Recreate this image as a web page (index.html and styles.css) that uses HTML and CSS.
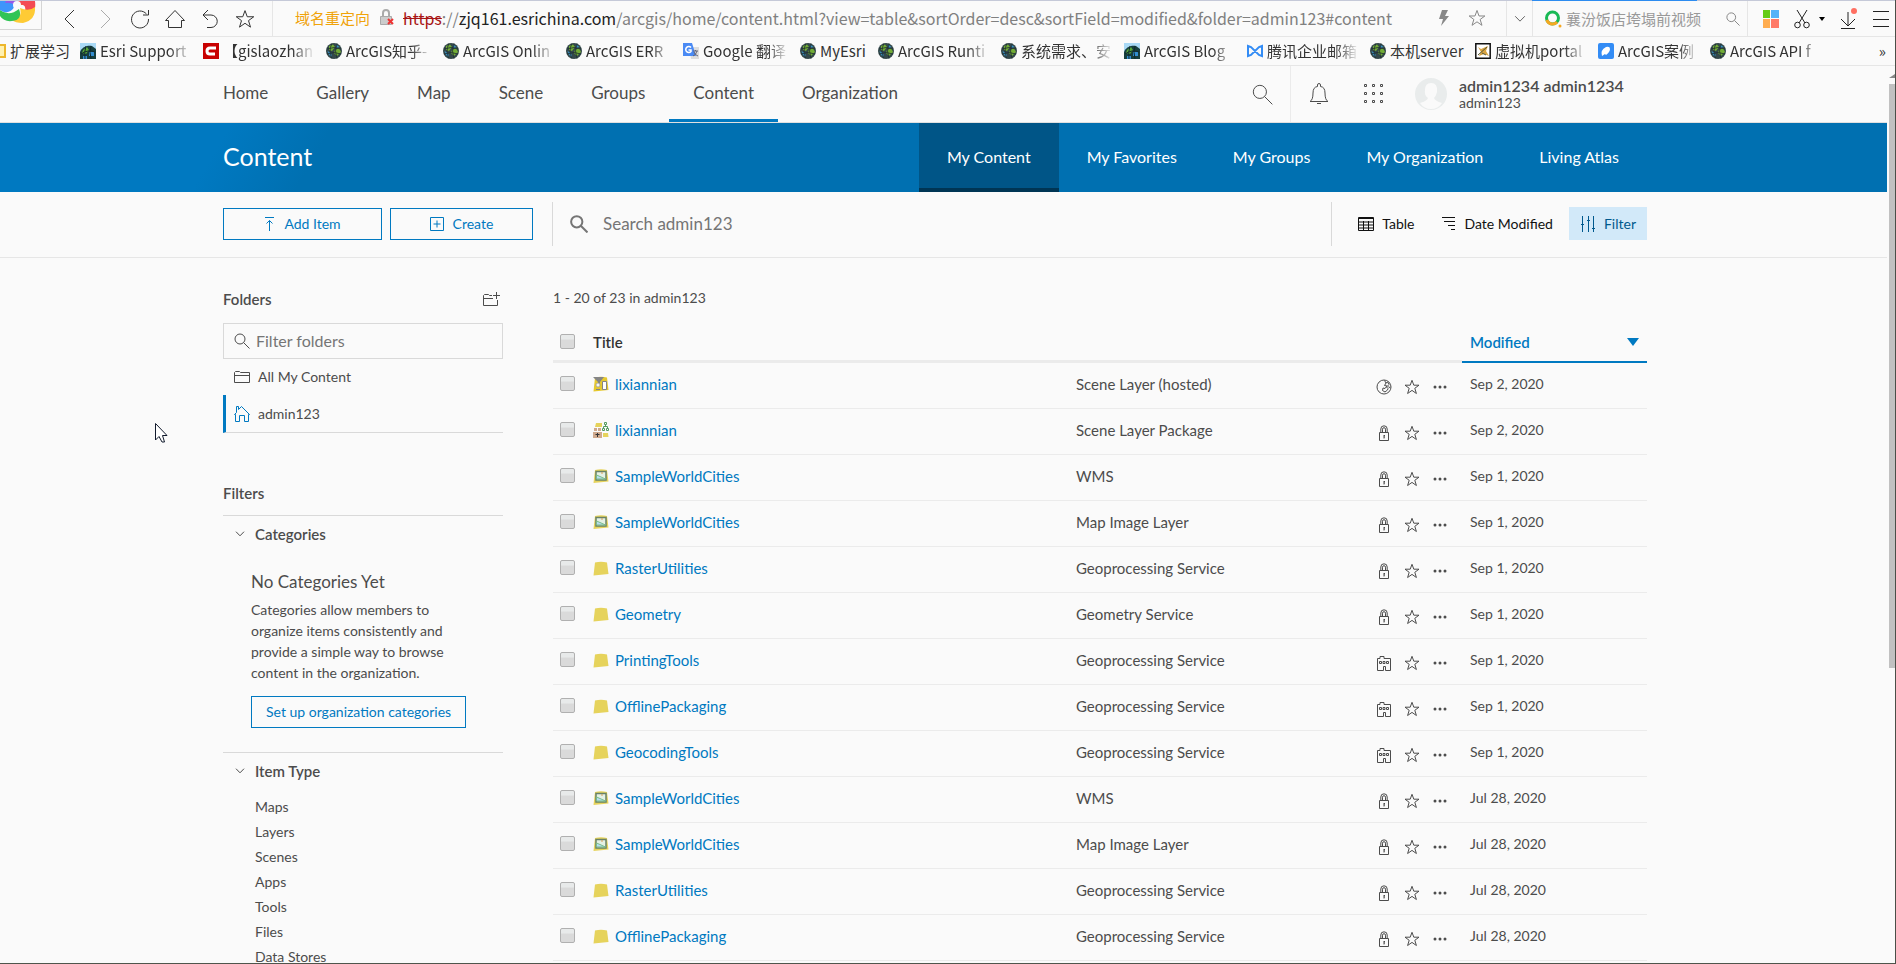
FILE: index.html
```html
<!DOCTYPE html>
<html lang="en">
  <head>
    <meta charset="UTF-8" />
    <meta name="viewport" content="width=device-width, initial-scale=1.0" />
    <title>Content</title>
    <link rel="stylesheet" href="styles.css">
  </head>
  <body>
    <svg class="sprite" aria-hidden="true">
      <symbol id="search" viewBox="0 0 16 16"><circle cx="6" cy="6" r="5" /><path d="M9.6 9.6 15.5 15.5" /></symbol>
      <symbol id="star" viewBox="0 0 16 16"><path d="M8 1.3 9.8 6.2H15L10.8 9.3 12.4 14.5 8 11.4 3.6 14.5 5.2 9.3 1 6.2H6.2Z" /></symbol>
      <symbol id="lock" viewBox="0 0 16 16"><path d="M3.5 7.5h9v8h-9zM4.8 7.5V4a3.2 3.2 0 0 1 6.4 0v3.5M6.5 7.5V4.2a1.5 1.5 0 0 1 3 0v3.3M8 10v3.5M8 10.5h1M8 12h1" /></symbol>
      <symbol id="globe" viewBox="0 0 16 16"><circle cx="8" cy="8" r="7" /><path d="M8.5 1.5 10 4 8.5 6.5 11 7 9 9.5 7 9 6.5 11.5 9 13 11.5 11 12 9.5 10.5 8M10 4l1.5-1L13 5.5 11.5 7 13 8.5l1.5-.5" /></symbol>
      <symbol id="org" viewBox="0 0 16 16"><path d="M1.5 15.5V3.5H4V1.5H8V3.5H14.5V15.5H9.5V11.5H7.5V15.5ZM3.5 6.5h2v2h-2zM7 6.5h2v2H7zM10.5 6.5h2v2h-2z" /></symbol>
      <symbol id="dots" viewBox="0 0 16 16"><g class="dots"><circle cx="3" cy="8" r="1.5" /><circle cx="8" cy="8" r="1.5" /><circle cx="13" cy="8" r="1.5" /></g></symbol>
      <symbol id="chevron" viewBox="0 0 10 6"><path d="M1 .7 5 4.8 9 .7" /></symbol>
      <symbol id="tool" viewBox="0 0 16 16"><path fill="#e6d35c" d="M2 2.5Q8 1 14 2.5L15.5 14Q8 14.5.5 15.5Z" /></symbol>
      <symbol id="map" viewBox="0 0 16 16"><path fill="#e6d35c" d="M2 2Q8 .5 14 2L15.5 13.5Q8 14 .5 15Z" /><path fill="#e4f1e5" stroke="#6a8268" stroke-width="1.5" d="M3 3.500h10v8.500H3z" /><path fill="#b7dcf2" stroke="#79bd89" d="M3.500 7 7 8.500 12.500 11H3.500Z" /><circle cx="9" cy="5" r=".8" fill="#d9944b" /></symbol>
      <symbol id="scene" viewBox="0 0 16 16"><path fill="#e6c92f" d="M2 1.500Q8 0 14 1.500L15.500 14Q8 14.500.500 15.500Z" /><path fill="#858585" d="M0 1h11L7 6v3H5V6Z" /><path fill="#fff" stroke="#858585" d="M9.500 5.500h4v8h-4z" /><circle cx="5" cy="9" r="2" fill="#f5f5f5" stroke="#999" stroke-width=".7" /><path fill="#ddd" stroke="#858585" d="M3 13.500h4" /></symbol>
      <symbol id="package" viewBox="0 0 16 16"><path fill="#e6d35c" d="M3 1h6v4H2zM10 11h5l.500 4H10Z" /><path fill="#cfa98d" d="M0 10h9v6H0zM1 6h3v3H1zM5 6h3v3H5z" /><path fill="none" stroke="#333" d="M4.500 11v4M2.500 12.500h4" /><path fill="none" stroke="#559a60" d="M11.500.500h2v2h-2zM9.500 6.500h2v2h-2zM13.500 6.500h2v2h-2zM12.500 3v2M10.500 6V4.500h4V6" /></symbol>
      <symbol id="earth" viewBox="0 0 16 16"><circle cx="8" cy="8" r="8" fill="#34484a" /><path fill="#72ad35" d="M3 3 7 1.500 9 4 6 8 3 7ZM9 7 13 5 15 9 11 13 8 10Z" /><path fill="#388fc0" d="M10 1.500 13.500 4 10 5ZM1.500 8 5 10 6 14 3 12Z" /><path fill="none" stroke="#1d2c31" stroke-width=".8" d="M1 6Q8 3 15 6M1 11Q8 8 15 11M6 .500Q2 8 6 15.500M11 .500Q8 8 11 15.500" /></symbol>
      <symbol id="earthBox" viewBox="0 0 16 16"><path fill="#a9d9f5" d="M0 0h16v16H0z" /><path fill="#173f3e" d="M0 16V9C2 4 7 2 12 3l4 3v10Z" /><path fill="#58a83a" d="M3 7 7 4 9 7 6 11 2 10Z" /><path fill="#338ed0" d="M9 9h5v4H9zM3 13h4v3H3z" /><path fill="none" stroke="#102a2e" d="M1 11Q8 6 15 9M6 3Q4 9 5 16M11 3Q9 9 11 16" /></symbol>
    </svg>

    <div class="window">
      <div class="tab-strip"><span class="tab-loading"></span></div>
      <header class="browser-bar">
        <div class="browser-logo">
          <svg width="40" height="29" viewBox="0 0 40 29"><path fill="#fb8c2b" d="M16 4C10-3 17-15 31-9L34 4Z" /><path fill="#f34b54" d="M16 4 24-9Q37-7 35 7Q31 14 25 10Q27 2 16 4Z" /><path fill="#fecb35" d="M20 7Q29 11 35 6Q36 19 23 22Q15 22 12 19Q23 17 20 7Z" /><path fill="#31c455" d="M19 8Q23 19 12 20Q4 21 0 15V9Q9 16 19 8Z" /><path fill="#3e95fb" d="M15 5Q9 15 0 9V0H10Z" /><path fill="#9657e7" d="M8-4 19-1 15 5Q12 1 5 2Z" /><circle cx="17" cy="4" r="4" fill="#fafafa" /></svg>
        </div>
        <nav class="browser-nav" aria-label="Browser">
          <button aria-label="Back"><svg class="icon" width="20" height="20" viewBox="0 0 20 20"><path d="M14 1 5 10 14 19" /></svg></button>
          <button class="disabled" aria-label="Forward"><svg class="icon" width="20" height="20" viewBox="0 0 20 20"><path d="M6 1 15 10 6 19" /></svg></button>
          <button aria-label="Reload"><svg class="icon" width="20" height="20" viewBox="0 0 20 20"><path d="M16.500 5A8.500 8.500 0 1 0 18.500 10M18.500 1V6H13" /></svg></button>
          <button aria-label="Home page"><svg class="icon" width="20" height="20" viewBox="0 0 20 20"><path d="M.500 11.500 10 1.500 19.500 11.500H16.500V18.500H3.500V11.500Z" /></svg></button>
          <button aria-label="Undo"><svg class="icon" width="20" height="20" viewBox="0 0 20 20"><path d="M8 1 3 6 8 11M3 6H11A6 6 0 0 1 11 18.500H7" /></svg></button>
          <button aria-label="Favorites"><svg class="icon" width="20" height="20"><use href="#star" /></svg></button>
        </nav>
        <div class="address">
          <span class="redirect">域名重定向</span>
          <svg width="15" height="17" viewBox="0 0 15 17"><path fill="none" stroke="#aaa" stroke-width="2" d="M3 8V4a3 3 0 0 1 6 0v4" /><path fill="#ccc" stroke="#aaa" d="M.500 7.500h11v8H.500z" /><path stroke="#e33" stroke-width="2" d="m8 10 5 5M13 10 8 15" /></svg>
          <span class="url"><s>https</s>://<b>zjq161.esrichina.com</b>/arcgis/home/content.html?view=table&amp;sortOrder=desc&amp;sortField=modified&amp;folder=admin123#content</span>
          <svg class="bolt" width="12" height="16" viewBox="0 0 12 16"><path fill="#888" d="M4 0h6L7 6h4L3 16 5 9H1Z" /></svg>
          <svg class="icon grey" width="18" height="18"><use href="#star" /></svg>
        </div>
        <button class="address-drop" aria-label="Show addresses"><svg class="icon" width="12" height="8"><use href="#chevron" /></svg></button>
        <div class="web-search">
          <svg width="17" height="18" viewBox="0 0 17 18"><circle cx="7.500" cy="8" r="6" fill="none" stroke="#19b955" stroke-width="3" /><path fill="none" stroke="#f6a821" stroke-width="3" d="M1.800 10A6 6 0 0 0 12 12" /><circle cx="15" cy="16" r="1.500" fill="#f6a821" /></svg>
          <input type="text" aria-label="Web search" placeholder="襄汾饭店垮塌前视频" />
          <svg class="icon grey" width="14" height="14"><use href="#search" /></svg>
        </div>
        <div class="browser-tools">
          <button aria-label="Apps"><svg width="16" height="18" viewBox="0 0 16 18"><path fill="#64cc16" d="M0 0h7v8H0z" /><path fill="#56b2f7" d="M8 0h8v8H8z" /><path fill="#ffad50" d="M0 9h7v9H0z" /><path fill="#ff7a68" d="M8 9h8v9H8z" /></svg></button>
          <button class="cut" aria-label="Cut"><svg class="icon" width="16" height="20" viewBox="0 0 16 20"><path d="M3 1 11 14M13 1 5 14" /><circle cx="3.500" cy="16" r="2.800" /><circle cx="12.500" cy="16" r="2.800" /></svg><svg width="6" height="4"><path d="M0 0h6L3 4Z" /></svg></button>
          <button aria-label="Downloads"><svg class="download" width="18" height="22" viewBox="0 0 18 22"><path d="M8 4V18M1 11 8 18 15 11M1 20.500H15" /><circle cx="14" cy="3" r="3" /></svg></button>
          <button aria-label="Menu"><svg class="menu" width="16" height="18"><path d="M0 1.500H16M0 9.500H16M0 16.500H16" /></svg></button>
        </div>
      </header>

      <nav class="bookmarks" aria-label="Bookmarks">
        <a class="bookmark cut-off" href="#"><svg width="6" height="14" viewBox="0 0 6 14"><path fill="#fff1b0" stroke="#edb72b" stroke-width="2" d="M-5 1H5V13H-5Z" /></svg><span>扩展学习</span></a>
        <a class="bookmark" href="#"><svg width="16" height="16"><use href="#earthBox" /></svg><span>Esri Support</span></a>
        <a class="bookmark" href="#"><svg width="16" height="16" viewBox="0 0 16 16"><path fill="#c80000" d="M0 0h16v16H0z" /><path fill="none" stroke="#fff" stroke-width="3" d="M13 5H7Q4 5 4 8T7 11H12" /></svg><span>【gislaozhan</span></a>
        <a class="bookmark narrow" href="#"><svg width="16" height="16"><use href="#earth" /></svg><span>ArcGIS知乎-</span></a>
        <a class="bookmark" href="#"><svg width="16" height="16"><use href="#earth" /></svg><span>ArcGIS Onlin</span></a>
        <a class="bookmark narrow" href="#"><svg width="16" height="16"><use href="#earth" /></svg><span>ArcGIS ERR</span></a>
        <a class="bookmark narrow" href="#"><svg width="16" height="16" viewBox="0 0 16 16"><path fill="#ddd" d="M6 4h10v12H8z" /><path fill="#4a8af4" d="M0 0h9l4 13H0z" /><path fill="none" stroke="#fff" stroke-width="1.500" d="M8 4.500A3 3 0 1 0 8 8.500V7H5.500" /><path stroke="#667" d="M10 8h5M12.500 7v1M14 8Q13 12 10 13M11 9q1 3 4 4" fill="none" /></svg><span>Google 翻译</span></a>
        <a class="bookmark short" href="#"><svg width="16" height="16"><use href="#earth" /></svg><span>MyEsri</span></a>
        <a class="bookmark" href="#"><svg width="16" height="16"><use href="#earth" /></svg><span>ArcGIS Runti</span></a>
        <a class="bookmark" href="#"><svg width="16" height="16"><use href="#earth" /></svg><span>系统需求、安</span></a>
        <a class="bookmark" href="#"><svg width="16" height="16"><use href="#earthBox" /></svg><span>ArcGIS Blog</span></a>
        <a class="bookmark" href="#"><svg width="16" height="16" viewBox="0 0 16 16"><path fill="none" stroke="#338cf5" stroke-width="2" d="M1 3v10l3-1 8-8 3-1v10l-3-1-8-8Z" /></svg><span>腾讯企业邮箱</span></a>
        <a class="bookmark medium" href="#"><svg width="16" height="16"><use href="#earth" /></svg><span>本机server</span></a>
        <a class="bookmark" href="#"><svg width="16" height="16" viewBox="0 0 16 16"><path fill="#fff" stroke="#111" stroke-width="1.500" d="M.800.800h14.400v14.400H.800z" /><path fill="#d9a441" d="m3 4 3 2 7-3-2 5 3 5-5-2-5 2 2-4Z" /><path stroke="#553" d="m3 12 9-8M7 10l4 2" /></svg><span>虚拟机portal</span></a>
        <a class="bookmark narrower" href="#"><svg width="16" height="16" viewBox="0 0 16 16"><rect width="16" height="16" rx="2" fill="#338cf5" /><path fill="#fff" d="M4 13Q2 7 8 4q4-1 4 2t-4 6l-1-1Z" /></svg><span>ArcGIS案例</span></a>
        <a class="bookmark" href="#"><svg width="16" height="16"><use href="#earth" /></svg><span>ArcGIS API f</span></a>
        <button class="more" aria-label="More bookmarks">»</button>
      </nav>

      <div class="viewport">
        <div class="page">
          <header class="site-header">
            <div class="container site-bar">
              <nav class="site-nav" aria-label="Site">
                <a href="#">Home</a>
                <a href="#">Gallery</a>
                <a href="#">Map</a>
                <a href="#">Scene</a>
                <a href="#">Groups</a>
                <a href="#" class="active">Content</a>
                <a href="#">Organization</a>
              </nav>
              <button class="header-search" aria-label="Search"><svg class="icon" width="21" height="21"><use href="#search" /></svg></button>
              <div class="account">
                <button aria-label="Notifications"><svg class="icon" width="20" height="22" viewBox="0 0 20 22"><path d="M1 18.500Q4 17 4 10Q4 4 8.500 3.500V2a1.500 1.500 0 0 1 3 0v1.500Q16 4 16 10Q16 17 19 18.500ZM8 20.500h4" /></svg></button>
                <button aria-label="App launcher"><svg class="icon" width="22" height="22" viewBox="0 0 22 22"><path d="M1.500 1.500h2v2h-2zM9.500 1.500h2v2h-2zM17.500 1.500h2v2h-2zM1.500 9.500h2v2h-2zM9.500 9.500h2v2h-2zM17.500 9.500h2v2h-2zM1.500 17.500h2v2h-2zM9.500 17.500h2v2h-2zM17.500 17.500h2v2h-2z" /></svg></button>
                <a class="profile" href="#">
                  <svg width="32" height="32" viewBox="0 0 32 32"><circle cx="16" cy="16" r="16" fill="#e9ecec" /><path fill="#fafafa" d="M16 5Q23 5 22 14Q21 18 19 20Q20 23 27 25Q23 31 16 31T5 25Q12 23 13 20Q9 17 10 12Q10 5 16 5Z" /></svg>
                  <span class="profile-text"><strong>admin1234 admin1234</strong><span>admin123</span></span>
                </a>
              </div>
            </div>
          </header>

          <div class="banner">
            <div class="container banner-bar">
              <h1>Content</h1>
              <nav class="tabs" aria-label="Content">
                <a href="#" class="active">My Content</a>
                <a href="#">My Favorites</a>
                <a href="#">My Groups</a>
                <a href="#">My Organization</a>
                <a href="#">Living Atlas</a>
              </nav>
            </div>
          </div>

          <div class="toolbar">
            <div class="container toolbar-bar">
              <div class="actions">
                <button class="btn add"><svg class="icon" width="11" height="16" viewBox="0 0 11 16"><path d="M1 1.500H10M5.500 15V4.500M2.500 7.500 5.500 4.500 8.500 7.500" /></svg>Add Item</button>
                <button class="btn create"><svg class="icon" width="14" height="14" viewBox="0 0 14 14"><path d="M.500.500h13v13H.500zM7 3.500v7M3.500 7h7" /></svg>Create</button>
              </div>
              <label class="item-search">
                <svg class="icon" width="18" height="18"><use href="#search" /></svg>
                <input type="text" aria-label="Search admin123" placeholder="Search admin123" />
              </label>
              <div class="views">
                <button class="view"><svg class="icon" width="16" height="16" viewBox="0 0 16 16"><path d="M.500 1.500h15v13H.500zM.500 2.500h15M.500 6h15M.500 9h15M.500 12h15M5.500 5v9M10.500 5v9" /></svg>Table</button>
                <button class="view"><svg class="icon" width="16" height="16" viewBox="0 0 16 16"><path d="M1 1.500H14M3 5.500H14M7 9.500H14M10 13.500H14" /></svg>Date Modified</button>
                <button class="view on"><svg class="icon" width="16" height="16" viewBox="0 0 16 16"><path d="M2.500 0v16M8.500 0v16M13.500 0v16M1 8.500h3M7 4.500h3M12 12.500h3" /></svg>Filter</button>
              </div>
            </div>
          </div>

          <div class="container columns">
            <aside class="sidebar">
              <div class="side-head">
                <h2>Folders</h2>
                <button aria-label="New folder"><svg class="icon" width="17" height="15" viewBox="0 0 17 15"><path d="M9 3.500H6.500L5.500 2.500H1.500L.500 3.500V13.500H14.500V8M.500 6.500H10M13.500 0v7M10 3.500h7" /></svg></button>
              </div>
              <label class="folder-filter">
                <svg class="icon" width="16" height="16"><use href="#search" /></svg>
                <input type="text" aria-label="Filter folders" placeholder="Filter folders" />
              </label>
              <a class="folder" href="#"><svg class="icon" width="16" height="16" viewBox="0 0 16 16"><path d="M.500 13.500V3.500L1.500 2.500H5.500L6.500 3.500H15.500V13.500ZM.500 6.500H15.500" /></svg>All My Content</a>
              <a class="folder current" href="#"><svg class="icon" width="16" height="18" viewBox="0 0 16 18"><path d="M.500 9.500 2.500 7.500V1.500H4.500V4.500L7.500 1.500 15.500 9.500H14.500V16.500H10.500V10.500H5.500V16.500H1.500V9.500Z" /></svg>admin123</a>

              <h2 class="filters-title">Filters</h2>
              <section class="filter">
                <h3><svg class="icon" width="10" height="6"><use href="#chevron" /></svg>Categories</h3>
                <div class="empty">
                  <h4>No Categories Yet</h4>
                  <p>Categories allow members to organize items consistently and provide a simple way to browse content in the organization.</p>
                  <button class="btn">Set up organization categories</button>
                </div>
              </section>
              <section class="filter">
                <h3><svg class="icon" width="10" height="6"><use href="#chevron" /></svg>Item Type</h3>
                <ul>
                  <li><a href="#">Maps</a></li>
                  <li><a href="#">Layers</a></li>
                  <li><a href="#">Scenes</a></li>
                  <li><a href="#">Apps</a></li>
                  <li><a href="#">Tools</a></li>
                  <li><a href="#">Files</a></li>
                  <li><a href="#">Data Stores</a></li>
                </ul>
              </section>
            </aside>

            <main class="content">
              <p class="count">1 - 20 of 23 in admin123</p>
              <table class="items">
                <thead>
                  <tr>
                    <th class="check"><input type="checkbox" aria-label="Select all" /></th>
                    <th class="title">Title</th>
                    <th class="type"></th>
                    <th class="tools"></th>
                    <th class="date"><span class="sort">Modified<svg width="12" height="8"><path fill="#0079c1" d="M0 0h12L6 8Z" /></svg></span></th>
                  </tr>
                </thead>
                <tbody>
                  <tr>
                    <td class="check"><input type="checkbox" aria-label="Select lixiannian" /></td>
                    <td class="title"><a href="#"><svg width="16" height="16"><use href="#scene" /></svg>lixiannian</a></td>
                    <td class="type">Scene Layer (hosted)</td>
                    <td><div class="row-tools"><svg class="icon" width="16" height="16"><use href="#globe" /></svg><button aria-label="Favorite"><svg class="icon" width="16" height="16"><use href="#star" /></svg></button><button aria-label="Options"><svg class="icon" width="16" height="16"><use href="#dots" /></svg></button></div></td>
                    <td class="date">Sep 2, 2020</td>
                  </tr>
                  <tr>
                    <td class="check"><input type="checkbox" aria-label="Select lixiannian" /></td>
                    <td class="title"><a href="#"><svg width="16" height="16"><use href="#package" /></svg>lixiannian</a></td>
                    <td class="type">Scene Layer Package</td>
                    <td><div class="row-tools"><svg class="icon" width="16" height="16"><use href="#lock" /></svg><button aria-label="Favorite"><svg class="icon" width="16" height="16"><use href="#star" /></svg></button><button aria-label="Options"><svg class="icon" width="16" height="16"><use href="#dots" /></svg></button></div></td>
                    <td class="date">Sep 2, 2020</td>
                  </tr>
                  <tr>
                    <td class="check"><input type="checkbox" aria-label="Select SampleWorldCities" /></td>
                    <td class="title"><a href="#"><svg width="16" height="16"><use href="#map" /></svg>SampleWorldCities</a></td>
                    <td class="type">WMS</td>
                    <td><div class="row-tools"><svg class="icon" width="16" height="16"><use href="#lock" /></svg><button aria-label="Favorite"><svg class="icon" width="16" height="16"><use href="#star" /></svg></button><button aria-label="Options"><svg class="icon" width="16" height="16"><use href="#dots" /></svg></button></div></td>
                    <td class="date">Sep 1, 2020</td>
                  </tr>
                  <tr>
                    <td class="check"><input type="checkbox" aria-label="Select SampleWorldCities" /></td>
                    <td class="title"><a href="#"><svg width="16" height="16"><use href="#map" /></svg>SampleWorldCities</a></td>
                    <td class="type">Map Image Layer</td>
                    <td><div class="row-tools"><svg class="icon" width="16" height="16"><use href="#lock" /></svg><button aria-label="Favorite"><svg class="icon" width="16" height="16"><use href="#star" /></svg></button><button aria-label="Options"><svg class="icon" width="16" height="16"><use href="#dots" /></svg></button></div></td>
                    <td class="date">Sep 1, 2020</td>
                  </tr>
                  <tr>
                    <td class="check"><input type="checkbox" aria-label="Select RasterUtilities" /></td>
                    <td class="title"><a href="#"><svg width="16" height="16"><use href="#tool" /></svg>RasterUtilities</a></td>
                    <td class="type">Geoprocessing Service</td>
                    <td><div class="row-tools"><svg class="icon" width="16" height="16"><use href="#lock" /></svg><button aria-label="Favorite"><svg class="icon" width="16" height="16"><use href="#star" /></svg></button><button aria-label="Options"><svg class="icon" width="16" height="16"><use href="#dots" /></svg></button></div></td>
                    <td class="date">Sep 1, 2020</td>
                  </tr>
                  <tr>
                    <td class="check"><input type="checkbox" aria-label="Select Geometry" /></td>
                    <td class="title"><a href="#"><svg width="16" height="16"><use href="#tool" /></svg>Geometry</a></td>
                    <td class="type">Geometry Service</td>
                    <td><div class="row-tools"><svg class="icon" width="16" height="16"><use href="#lock" /></svg><button aria-label="Favorite"><svg class="icon" width="16" height="16"><use href="#star" /></svg></button><button aria-label="Options"><svg class="icon" width="16" height="16"><use href="#dots" /></svg></button></div></td>
                    <td class="date">Sep 1, 2020</td>
                  </tr>
                  <tr>
                    <td class="check"><input type="checkbox" aria-label="Select PrintingTools" /></td>
                    <td class="title"><a href="#"><svg width="16" height="16"><use href="#tool" /></svg>PrintingTools</a></td>
                    <td class="type">Geoprocessing Service</td>
                    <td><div class="row-tools"><svg class="icon" width="16" height="16"><use href="#org" /></svg><button aria-label="Favorite"><svg class="icon" width="16" height="16"><use href="#star" /></svg></button><button aria-label="Options"><svg class="icon" width="16" height="16"><use href="#dots" /></svg></button></div></td>
                    <td class="date">Sep 1, 2020</td>
                  </tr>
                  <tr>
                    <td class="check"><input type="checkbox" aria-label="Select OfflinePackaging" /></td>
                    <td class="title"><a href="#"><svg width="16" height="16"><use href="#tool" /></svg>OfflinePackaging</a></td>
                    <td class="type">Geoprocessing Service</td>
                    <td><div class="row-tools"><svg class="icon" width="16" height="16"><use href="#org" /></svg><button aria-label="Favorite"><svg class="icon" width="16" height="16"><use href="#star" /></svg></button><button aria-label="Options"><svg class="icon" width="16" height="16"><use href="#dots" /></svg></button></div></td>
                    <td class="date">Sep 1, 2020</td>
                  </tr>
                  <tr>
                    <td class="check"><input type="checkbox" aria-label="Select GeocodingTools" /></td>
                    <td class="title"><a href="#"><svg width="16" height="16"><use href="#tool" /></svg>GeocodingTools</a></td>
                    <td class="type">Geoprocessing Service</td>
                    <td><div class="row-tools"><svg class="icon" width="16" height="16"><use href="#org" /></svg><button aria-label="Favorite"><svg class="icon" width="16" height="16"><use href="#star" /></svg></button><button aria-label="Options"><svg class="icon" width="16" height="16"><use href="#dots" /></svg></button></div></td>
                    <td class="date">Sep 1, 2020</td>
                  </tr>
                  <tr>
                    <td class="check"><input type="checkbox" aria-label="Select SampleWorldCities" /></td>
                    <td class="title"><a href="#"><svg width="16" height="16"><use href="#map" /></svg>SampleWorldCities</a></td>
                    <td class="type">WMS</td>
                    <td><div class="row-tools"><svg class="icon" width="16" height="16"><use href="#lock" /></svg><button aria-label="Favorite"><svg class="icon" width="16" height="16"><use href="#star" /></svg></button><button aria-label="Options"><svg class="icon" width="16" height="16"><use href="#dots" /></svg></button></div></td>
                    <td class="date">Jul 28, 2020</td>
                  </tr>
                  <tr>
                    <td class="check"><input type="checkbox" aria-label="Select SampleWorldCities" /></td>
                    <td class="title"><a href="#"><svg width="16" height="16"><use href="#map" /></svg>SampleWorldCities</a></td>
                    <td class="type">Map Image Layer</td>
                    <td><div class="row-tools"><svg class="icon" width="16" height="16"><use href="#lock" /></svg><button aria-label="Favorite"><svg class="icon" width="16" height="16"><use href="#star" /></svg></button><button aria-label="Options"><svg class="icon" width="16" height="16"><use href="#dots" /></svg></button></div></td>
                    <td class="date">Jul 28, 2020</td>
                  </tr>
                  <tr>
                    <td class="check"><input type="checkbox" aria-label="Select RasterUtilities" /></td>
                    <td class="title"><a href="#"><svg width="16" height="16"><use href="#tool" /></svg>RasterUtilities</a></td>
                    <td class="type">Geoprocessing Service</td>
                    <td><div class="row-tools"><svg class="icon" width="16" height="16"><use href="#lock" /></svg><button aria-label="Favorite"><svg class="icon" width="16" height="16"><use href="#star" /></svg></button><button aria-label="Options"><svg class="icon" width="16" height="16"><use href="#dots" /></svg></button></div></td>
                    <td class="date">Jul 28, 2020</td>
                  </tr>
                  <tr>
                    <td class="check"><input type="checkbox" aria-label="Select OfflinePackaging" /></td>
                    <td class="title"><a href="#"><svg width="16" height="16"><use href="#tool" /></svg>OfflinePackaging</a></td>
                    <td class="type">Geoprocessing Service</td>
                    <td><div class="row-tools"><svg class="icon" width="16" height="16"><use href="#lock" /></svg><button aria-label="Favorite"><svg class="icon" width="16" height="16"><use href="#star" /></svg></button><button aria-label="Options"><svg class="icon" width="16" height="16"><use href="#dots" /></svg></button></div></td>
                    <td class="date">Jul 28, 2020</td>
                  </tr>
                </tbody>
              </table>
            </main>
          </div>
        </div>
        <div class="scrollbar"><svg width="6" height="4"><path fill="#888" d="M0 4 6 0V4Z" /></svg><span class="thumb"></span></div>
      </div>
      <svg class="pointer" width="13" height="20" viewBox="0 0 13 20"><path fill="#fff" stroke="#111a2c" d="M.500.500V17L4 13.500 7 19H9.500L7.500 12.500H12Z" /></svg>
    </div>
  </body>
</html>
```

FILE: styles.css
```css
* {
  box-sizing: border-box;
}
body {
  margin: 0;
  background-color: #fafafa;
  color: #4c4c4c;
  font-family: Lato, "Noto Sans CJK SC", sans-serif;
  font-size: 15px;
  line-height: 20px;
}
a {
  color: inherit;
  text-decoration: none;
}
h1, h2, h3, h4, p, ul {
  margin: 0;
  padding: 0;
}
button {
  display: flex;
  align-items: center;
  justify-content: center;
  padding: 0;
  border: none;
  background: none;
  color: inherit;
  font: inherit;
  cursor: pointer;
}
input {
  font: inherit;
  color: inherit;
}
input[type="text"] {
  flex: 1;
  min-width: 0;
  padding: 0;
  border: none;
  outline: none;
  background: none;
}
input::placeholder {
  color: #757575;
  opacity: 1;
}
svg {
  flex: none;
  display: block;
}
.sprite {
  position: absolute;
  width: 0;
  height: 0;
}
symbol path,
symbol circle {
  vector-effect: non-scaling-stroke;
}
.icon {
  fill: none;
  stroke: currentColor;
  stroke-width: 1;
}
.dots {
  fill: #4c4c4c;
  stroke: none;
}
.window {
  position: relative;
  display: flex;
  flex-direction: column;
  height: 100vh;
  overflow: hidden;
  border-right: 1px solid #4a4f48;
  border-bottom: 1px solid #4f554c;
}

/* Browser bars */
.tab-strip {
  flex: none;
  display: flex;
  justify-content: flex-end;
  height: 1px;
  padding-right: 198px;
  background-color: #c5c9d8;
}
.tab-loading {
  width: 165px;
  background-color: #2d8cf0;
}
.browser-bar {
  flex: none;
  display: flex;
  align-items: center;
  height: 36px;
  border-bottom: 1px solid #e6e6e6;
  font-family: "Noto Sans CJK SC", sans-serif;
  font-size: 16px;
}
.browser-logo {
  align-self: flex-start;
  width: 42px;
  height: 29px;
  border-right: 1px solid #d5d5d5;
  border-bottom: 1px solid #d5d5d5;
}
.browser-nav {
  display: flex;
  align-items: center;
  gap: 15px;
  width: 231px;
  height: 100%;
  padding-left: 18px;
  border-right: 1px solid #e6e6e6;
  color: #333;
}
.browser-nav .disabled {
  color: #aaa;
}
.address {
  flex: 1;
  display: flex;
  align-items: center;
  min-width: 0;
  padding: 0 20px 2px 22px;
}
.redirect {
  margin-right: 10px;
  color: #f0a30a;
  font-size: 15px;
}
.url {
  flex: 1;
  margin-left: 8px;
  color: #808080;
  white-space: nowrap;
}
.url s {
  color: #a81414;
}
.url b {
  color: #222;
  font-weight: normal;
}
.bolt {
  margin-right: 18px;
}
.grey {
  color: #888;
}
.address-drop {
  width: 27px;
  height: 100%;
  border-left: 1px solid #e6e6e6;
  border-right: 1px solid #e6e6e6;
  color: #666;
}
.web-search {
  display: flex;
  align-items: center;
  gap: 4px;
  width: 215px;
  height: 100%;
  padding: 0 7px 0 12px;
  border-right: 1px solid #e6e6e6;
  font-size: 15px;
}
.web-search input::placeholder {
  color: #999;
}
.browser-tools {
  display: flex;
  align-items: center;
  gap: 15px;
  width: 147px;
  padding: 0 8px 0 15px;
  color: #222;
}
.cut {
  gap: 9px;
}
.download {
  fill: none;
  stroke: #222;
  stroke-width: 1;
}
.download circle {
  fill: #ff6f61;
  stroke: none;
}
.menu {
  stroke: #222;
  stroke-width: 1;
}
.bookmarks {
  flex: none;
  display: flex;
  align-items: center;
  gap: 11px;
  height: 29px;
  padding-right: 9px;
  border-bottom: 1px solid #e6e6e6;
  color: #333;
  font-family: "Noto Sans CJK SC", sans-serif;
  font-size: 15px;
}
.bookmark {
  display: flex;
  align-items: center;
  gap: 4px;
  width: 112px;
}
.bookmark span {
  flex: 1;
  white-space: nowrap;
  -webkit-mask-image: linear-gradient(to right, #000 75%, transparent);
  mask-image: linear-gradient(to right, #000 75%, transparent);
}
.bookmark.cut-off {
  width: 69px;
}
.bookmark.cut-off span,
.bookmark.short span,
.bookmark.medium span {
  -webkit-mask-image: none;
  mask-image: none;
}
.bookmark.short {
  width: 67px;
}
.bookmark.medium {
  width: 94px;
}
.bookmark.narrow {
  width: 106px;
}
.bookmark.narrower {
  width: 101px;
}
.more {
  margin-left: auto;
}

/* Page */
.viewport {
  flex: 1;
  display: flex;
  min-height: 0;
}
.page {
  flex: 1;
  min-width: 0;
  overflow: hidden;
}
.scrollbar {
  display: flex;
  flex-direction: column;
  gap: 6px;
  width: 8px;
  padding: 8px 0 0 2px;
}
.thumb {
  height: 584px;
  background-color: #c1c1c1;
}
.container {
  width: 76%;
  min-width: 1240px;
  max-width: 1424px;
  margin-left: 223px;
}
.site-header {
  border-bottom: 1px solid #e0e0e0;
}
.site-bar {
  display: flex;
  align-items: center;
  height: 56px;
}
.site-nav {
  flex: 1;
  display: flex;
  height: 100%;
  margin-left: -24px;
  font-size: 17px;
}
.site-nav a {
  display: flex;
  align-items: center;
  padding: 0 24px;
  border-bottom: 3px solid transparent;
}
.site-nav .active {
  border-bottom-color: #0079c1;
}
.header-search {
  margin-right: 17px;
}
.account {
  display: flex;
  align-items: center;
  gap: 34px;
  width: 357px;
  height: 100%;
  padding-left: 18px;
  border-left: 1px solid #ebebeb;
}
.profile {
  display: flex;
  align-items: center;
  gap: 12px;
  margin-left: -4px;
}
.profile-text {
  display: flex;
  flex-direction: column;
  font-size: 14px;
  line-height: 17px;
}
.profile-text strong {
  font-size: 16px;
}
strong, h2, h3, th {
  font-weight: 600;
}
.banner {
  background: linear-gradient(120deg, #0079c1 200px, #0070b1 290px);
  color: #fff;
}
.banner-bar {
  display: flex;
  align-items: center;
  justify-content: space-between;
  height: 69px;
}
h1 {
  padding-bottom: 4px;
  font-size: 25px;
  font-weight: normal;
}
.tabs {
  display: flex;
  height: 100%;
  font-size: 16px;
}
.tabs a {
  display: flex;
  align-items: center;
  padding: 2px 28px 0;
  border-bottom: 4px solid transparent;
}
.tabs .active {
  background-color: #005587;
  border-bottom-color: #003554;
}
.toolbar {
  border-bottom: 1px solid #e6e6e6;
}
.toolbar-bar {
  display: flex;
  align-items: center;
  height: 65px;
  padding-bottom: 2px;
}
.actions {
  display: flex;
  gap: 8px;
  width: 329px;
}
.btn {
  gap: 9px;
  height: 32px;
  padding: 0 14px;
  border: 1px solid #0079c1;
  color: #0079c1;
  font-size: 14px;
}
.add {
  width: 159px;
}
.create {
  width: 143px;
}
.item-search {
  flex: 1;
  display: flex;
  align-items: center;
  gap: 15px;
  height: 44px;
  padding: 0 17px;
  border-left: 1px solid #d9d9d9;
  border-right: 1px solid #d9d9d9;
  color: #757575;
  font-size: 17px;
}
.item-search .icon {
  stroke-width: 2;
}
.views {
  display: flex;
  gap: 16px;
  margin-left: 16px;
  color: #111;
  font-size: 14px;
}
.view {
  gap: 8px;
  height: 33px;
  padding-left: 10px;
}
.view.on {
  padding: 0 11px;
  background-color: #d2e9f9;
  color: #00598e;
}
.columns {
  display: flex;
  gap: 50px;
}

/* Sidebar */
.sidebar {
  flex: none;
  width: 280px;
  padding-top: 31px;
}
.side-head {
  display: flex;
  align-items: center;
  justify-content: space-between;
  padding-right: 3px;
}
h2 {
  font-size: 15px;
}
.folder-filter {
  display: flex;
  align-items: center;
  gap: 6px;
  height: 36px;
  margin-top: 14px;
  padding: 0 10px;
  border: 1px solid #d9d9d9;
  font-size: 16px;
}
.folder {
  display: flex;
  align-items: center;
  gap: 8px;
  height: 36px;
  padding-left: 11px;
  font-size: 14px;
}
.folder.current {
  height: 38px;
  padding-left: 8px;
  border-left: 3px solid #0079c1;
  border-bottom: 1px solid #d9d9d9;
}
.folder.current .icon {
  color: #0079c1;
}
.filters-title {
  margin: 50px 0 12px;
}
.filter {
  border-top: 1px solid #d9d9d9;
}
.filter h3 {
  display: flex;
  align-items: center;
  gap: 10px;
  height: 36px;
  padding-left: 12px;
  font-size: 15px;
}
.empty {
  padding: 20px 28px 24px;
}
.empty h4 {
  margin-bottom: 7px;
  font-size: 17px;
  font-weight: normal;
}
.empty p {
  margin-bottom: 13px;
  font-size: 14px;
  line-height: 21px;
}
.filter ul {
  margin: 5px 0 0 32px;
  list-style: none;
  font-size: 14px;
  line-height: 25px;
}

/* Items */
.content {
  flex: 1;
  min-width: 0;
  padding-top: 30px;
}
.count {
  font-size: 14px;
}
.items {
  width: 100%;
  margin-top: 15px;
  border-collapse: separate;
  border-spacing: 0;
  table-layout: fixed;
  font-size: 14px;
}
.items th {
  height: 40px;
  padding: 0;
  border-bottom: 3px solid #ebebeb;
  color: #323232;
  font-size: 15px;
  text-align: left;
}
.items td {
  height: 46px;
  padding: 0 0 4px;
  border-bottom: 1px solid #ebebeb;
}
.items .check {
  width: 40px;
  padding-left: 7px;
}
.items .type {
  width: 300px;
  font-size: 15px;
}
.items .tools {
  width: 86px;
}
.items th.date {
  width: 185px;
  border-bottom: 2px solid #0079c1;
  color: #0079c1;
}
.items .date {
  padding-left: 8px;
}
.sort {
  display: flex;
  align-items: center;
  justify-content: space-between;
  padding-right: 8px;
}
.items input {
  display: block;
  width: 15px;
  height: 15px;
  margin: 0;
  appearance: none;
  border: 1px solid #b0b0b0;
  border-radius: 2px;
  background: linear-gradient(#e8eaea 30%, #dadada 40%);
}
.title a {
  display: flex;
  align-items: center;
  gap: 6px;
  color: #0079c1;
  font-size: 15px;
}
.row-tools {
  display: flex;
  align-items: center;
  gap: 12px;
  padding-top: 6px;
}
.pointer {
  position: absolute;
  left: 155px;
  top: 423px;
}
```
